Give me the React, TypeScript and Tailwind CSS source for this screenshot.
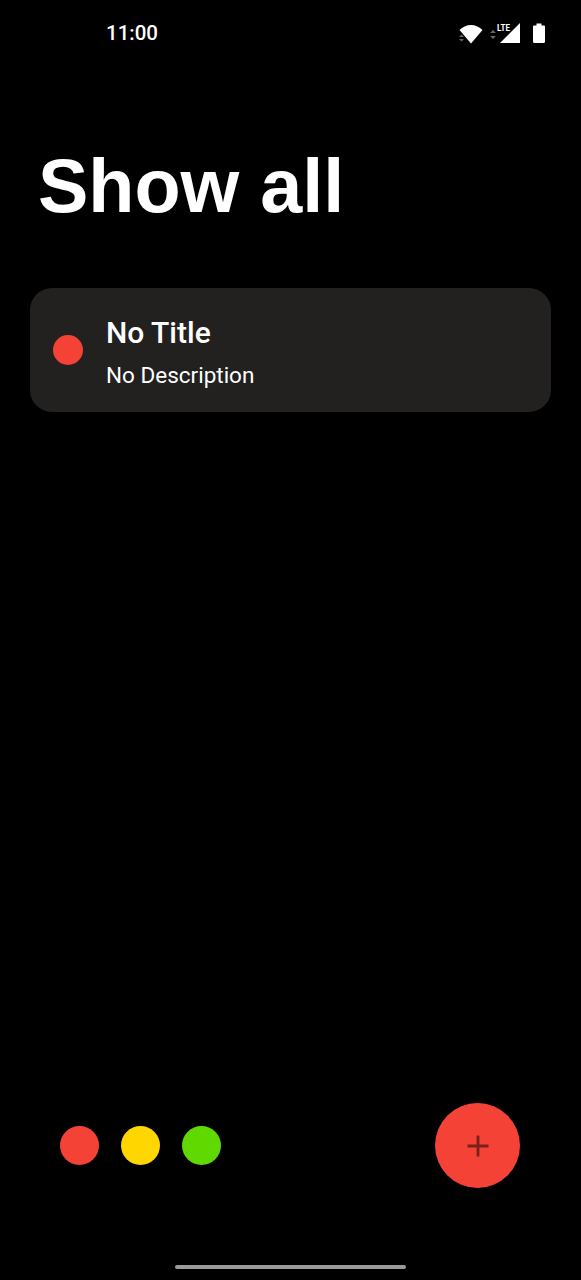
import React from 'react';

const ROBOTO = { fontFamily: 'Roboto, sans-serif' };

function StatusIcons() {
  return (
    <div className="mt-[2px] flex items-center">
      <svg width="24" height="20" viewBox="0 0 24 20">
        <path d="M0.5 6C3.5 3 7.5 1 12 1s8.5 2 11.5 5L12 19.5z" fill="#fff" />
        <path d="M0 13l2.5-2.5L5 13zM0 15l2.5 2.5L5 15z" fill="#666" />
      </svg>
      <svg width="32" height="24" viewBox="0 0 32 24" className="ml-[6px]">
        <path d="M1 11l3-3 3 3zM1 14l3 3 3-3z" fill="#666" />
        <text x="8" y="9" fill="#fff" fontSize="9.5" fontWeight="700" textLength="13" lengthAdjust="spacingAndGlyphs" style={{ fontFamily: 'Roboto, sans-serif' }}>LTE</text>
        <path d="M31 1v20H11z" fill="#fff" />
      </svg>
      <svg width="14" height="20" viewBox="0 0 14 20" className="mb-[2px] ml-[11px]">
        <path d="M4.5 0.5h5v2H12a1 1 0 0 1 1 1v15a1.5 1.5 0 0 1-1.5 1.5h-9A1.5 1.5 0 0 1 1 18.5v-15a1 1 0 0 1 1-1h2.5z" fill="#fff" />
      </svg>
    </div>
  );
}

function ColorDot({ color }: { color: string }) {
  return <div className={`h-[39px] w-[39px] rounded-full ${color}`} />;
}

export default function App() {
  return (
    <div className="flex h-[1280px] w-[581px] flex-col overflow-hidden bg-black text-white">
      <div className="flex h-[66px] shrink-0 items-center justify-between pl-[106px] pr-[35px]" style={ROBOTO}>
        <span className="text-[20.5px] font-medium">11:00</span>
        <StatusIcons />
      </div>

      <h1 className="mt-[72px] pl-[38px] text-[75.5px] font-bold leading-[96px]" style={{ fontFamily: '"Liberation Sans", Arial, sans-serif' }}>
        Show all
      </h1>

      <div className="mx-[30px] mt-[54px] flex h-[124px] items-center rounded-[22px] bg-[#222120] pl-[23px]" style={ROBOTO}>
        <div className="h-[30px] w-[30px] rounded-full bg-[#f44336]" />
        <div className="ml-[23px] pt-[4px]">
          <p className="text-[30px] font-medium leading-[36px]">No Title</p>
          <p className="mt-[9px] text-[22.5px] leading-[30px]">No Description</p>
        </div>
      </div>

      <div className="mt-auto flex items-center justify-between pl-[60px] pr-[61px]">
        <div className="mb-[1px] flex gap-[22px]">
          <ColorDot color="bg-[#f44336]" />
          <ColorDot color="bg-[#ffd600]" />
          <ColorDot color="bg-[#60d900]" />
        </div>
        <button className="flex h-[85px] w-[85px] items-center justify-center rounded-full bg-[#f44336]">
          <svg width="24" height="24" viewBox="0 0 24 24">
            <path d="M12 1.5v21M1.5 12h21" stroke="#7a1f1a" strokeWidth="2.8" fill="none" />
          </svg>
        </button>
      </div>

      <div className="mb-[11px] mt-[77px] flex justify-center">
        <div className="h-[4px] w-[231px] rounded-full bg-[#9a9a9a]" />
      </div>
    </div>
  );
}
